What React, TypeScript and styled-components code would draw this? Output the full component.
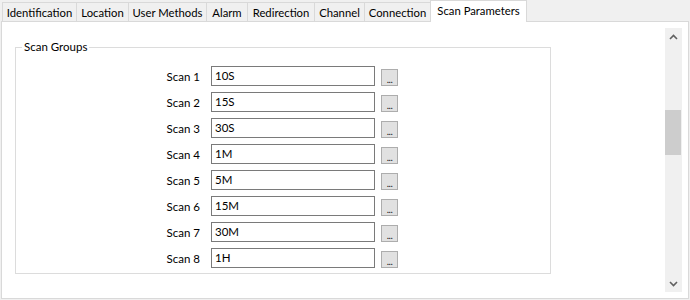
import styled, { createGlobalStyle } from "styled-components";

const GlobalStyle = createGlobalStyle`
    html, body {
        margin: 0;
        padding: 0;
        background-color: #f0f0f0;
    }
    body {
        font-family: Lato, "Noto Sans", sans-serif;
        font-size: 11.5px;
        color: #000;
    }
`;

const Window = styled.div`
    width: 690px;
    height: 300px;
    background-color: #f0f0f0;
    overflow: hidden;
`;

const TabStrip = styled.div`
    display: flex;
    align-items: flex-end;
    height: 21px;
    padding-left: 2px;
`;

const Tab = styled.div<{ $active?: boolean; $w: number }>`
    box-sizing: border-box;
    width: ${(p) => p.$w}px;
    height: ${(p) => (p.$active ? 22 : 19)}px;
    margin-bottom: ${(p) => (p.$active ? -1 : 0)}px;
    position: relative;
    z-index: ${(p) => (p.$active ? 1 : 0)};
    display: flex;
    align-items: center;
    justify-content: center;
    padding-bottom: ${(p) => (p.$active ? 3 : 0)}px;
    background-color: ${(p) => (p.$active ? "#ffffff" : "#f0f0f0")};
    border: 1px solid #d9d9d9;
    border-bottom: none;
    border-right: ${(p) => (p.$active ? "1px solid #d9d9d9" : "none")};
    white-space: nowrap;
    font-size: 11.3px;
`;

const Panel = styled.div`
    box-sizing: border-box;
    margin-left: 1px;
    width: 688px;
    height: 278px;
    background-color: #ffffff;
    border: 1px solid #d9d9d9;
    display: flex;
`;

const Content = styled.div`
    flex: 1;
    padding: 17px 0 0 13px;
`;

const GroupBox = styled.fieldset`
    box-sizing: border-box;
    width: 536px;
    margin: 0;
    padding: 11px 0 5px 0;
    border: 1px solid #dcdcdc;
    display: flex;
    flex-direction: column;
    gap: 6px;
`;

const Legend = styled.legend`
    margin-left: 6px;
    padding: 0 2px;
    line-height: 16px;
`;

const Row = styled.div`
    display: flex;
    align-items: center;
    height: 20px;
`;

const Label = styled.span`
    width: 184px;
    text-align: right;
    margin-right: 11px;
`;

const Input = styled.div`
    box-sizing: border-box;
    width: 164px;
    height: 20px;
    border: 1px solid #7a7a7a;
    padding: 0 0 0 3px;
    line-height: 17px;
    background-color: #fff;
`;

const DotsButton = styled.div`
    box-sizing: border-box;
    width: 17px;
    height: 17px;
    margin: 2px 0 0 6px;
    background-color: #e1e1e1;
    border: 1px solid #adadad;
    font-size: 10px;
    line-height: 18px;
    text-align: center;
    letter-spacing: -0.5px;
    color: #202020;
`;

const ScrollBar = styled.div`
    width: 17px;
    height: 264px;
    margin: 6px 6px 0 0;
    background-color: #f0f0f0;
    display: flex;
    flex-direction: column;
`;

const ArrowButton = styled.div`
    height: 17px;
    display: flex;
    align-items: center;
    justify-content: center;
`;

const Track = styled.div`
    flex: 1;
    display: flex;
    flex-direction: column;
`;

const Thumb = styled.div<{ $top: number; $size: number }>`
    margin-top: ${(p) => p.$top}px;
    height: ${(p) => p.$size}px;
    margin-right: 1px;
    background-color: #cdcdcd;
`;

const tabs = [
    { name: "Identification", w: 74 },
    { name: "Location", w: 52 },
    { name: "User Methods", w: 78 },
    { name: "Alarm", w: 41 },
    { name: "Redirection", w: 67 },
    { name: "Channel", w: 50 },
    { name: "Connection", w: 66 },
    { name: "Scan Parameters", w: 97, active: true },
];

const scans = ["10S", "15S", "30S", "1M", "5M", "15M", "30M", "1H"];

function Chevron({ up }: { up?: boolean }) {
    return (
        <svg width="9" height="6" viewBox="0 0 9 6">
            <polyline
                points={up ? "1,5 4.5,1.5 8,5" : "1,1 4.5,4.5 8,1"}
                fill="none"
                stroke="#606060"
                strokeWidth="1.6"
            />
        </svg>
    );
}

export default function App() {
    return (
        <Window>
            <GlobalStyle />
            <TabStrip>
                {tabs.map((t) => (
                    <Tab key={t.name} $w={t.w} $active={t.active}>
                        {t.name}
                    </Tab>
                ))}
            </TabStrip>
            <Panel>
                <Content>
                    <GroupBox>
                        <Legend>Scan Groups</Legend>
                        {scans.map((v, i) => (
                            <Row key={i}>
                                <Label>Scan {i + 1}</Label>
                                <Input>{v}</Input>
                                <DotsButton>...</DotsButton>
                            </Row>
                        ))}
                    </GroupBox>
                </Content>
                <ScrollBar>
                    <ArrowButton>
                        <Chevron up />
                    </ArrowButton>
                    <Track>
                        <Thumb $top={65} $size={45} />
                    </Track>
                    <ArrowButton>
                        <Chevron />
                    </ArrowButton>
                </ScrollBar>
            </Panel>
        </Window>
    );
}
